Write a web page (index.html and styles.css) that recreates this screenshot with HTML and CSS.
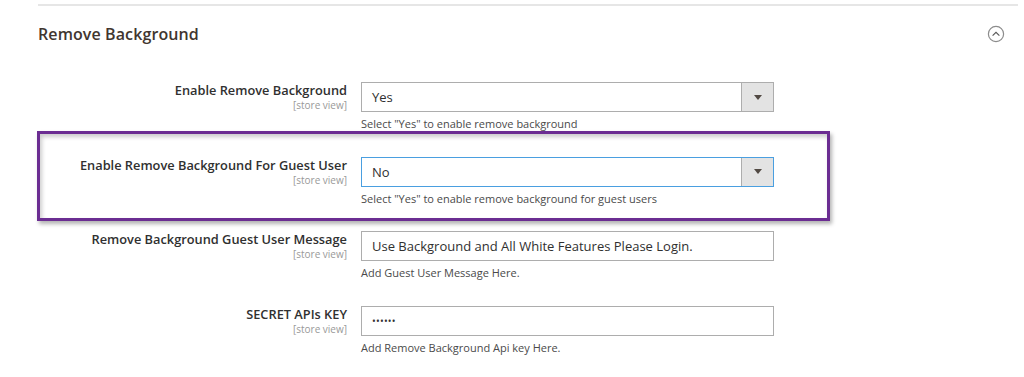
FILE: index.html
```html
<!DOCTYPE html>
<html>
<head>
<meta charset="utf-8">
<link rel="stylesheet" href="styles.css">
</head>
<body>
<div class="section">
  <div class="section-head">
    <h2 class="title">Remove Background</h2>
    <span class="toggle">
      <svg width="18" height="18" viewBox="0 0 18 18"><circle cx="9" cy="9" r="7.6" fill="none" stroke="#8c8c8c" stroke-width="1.2"/><path d="M5.6 10.6 L9 7.4 L12.4 10.6" fill="none" stroke="#5a5a5a" stroke-width="1.2"/></svg>
    </span>
  </div>
  <div class="rows">
    <div class="row">
      <div class="label"><span class="name">Enable Remove Background</span><span class="scope">[store view]</span></div>
      <div class="control">
        <div class="select"><span class="val">Yes</span><span class="btn"><span class="arrow"></span></span></div>
        <div class="hint">Select "Yes" to enable remove background</div>
      </div>
    </div>
    <div class="row highlighted">
      <div class="label"><span class="name">Enable Remove Background For Guest User</span><span class="scope">[store view]</span></div>
      <div class="control">
        <div class="select focused"><span class="val">No</span><span class="btn"><span class="arrow"></span></span></div>
        <div class="hint">Select "Yes" to enable remove background for guest users</div>
      </div>
    </div>
    <div class="row">
      <div class="label"><span class="name">Remove Background Guest User Message</span><span class="scope">[store view]</span></div>
      <div class="control">
        <div class="input"><span class="val">Use Background and All White Features Please Login.</span></div>
        <div class="hint">Add Guest User Message Here.</div>
      </div>
    </div>
    <div class="row">
      <div class="label"><span class="name">SECRET APIs KEY</span><span class="scope">[store view]</span></div>
      <div class="control">
        <div class="input"><span class="val dots">••••••</span></div>
        <div class="hint">Add Remove Background Api key Here.</div>
      </div>
    </div>
  </div>
</div>
</body>
</html>
```

FILE: styles.css
```css
* { box-sizing: border-box; }
html, body { margin: 0; padding: 0; background: #ffffff; }
body {
  font-family: "Open Sans", "Noto Sans", sans-serif;
  color: #303030;
  width: 1024px;
  height: 377px;
  overflow: hidden;
}
.section {
  margin: 4px 6px 0 38px;
  border-top: 2px solid #e6e6e6;
}
.section-head {
  display: flex;
  align-items: center;
  justify-content: space-between;
  height: 56px;
}
.title {
  margin: 0;
  font-size: 16px;
  font-weight: 600;
  color: #41362f;
  letter-spacing: 0.1px;
}
.toggle {
  display: flex;
  margin-right: 13px;
}
.rows {
  display: flex;
  flex-direction: column;
  padding-top: 20px;
}
.row {
  display: grid;
  grid-template-columns: 309px 413px;
  column-gap: 14px;
  height: 74.5px;
}
.label {
  display: flex;
  flex-direction: column;
  align-items: flex-end;
  text-align: right;
}
.name {
  font-size: 12.8px;
  font-weight: 600;
  color: #303030;
  line-height: 17px;
}
.scope {
  font-size: 10px;
  color: #999999;
  line-height: 12px;
}
.select, .input {
  height: 30px;
  border: 1px solid #adadad;
  background: #ffffff;
  display: flex;
  align-items: center;
}
.select.focused { border-color: #4a9fe0; }
.val {
  flex: 1;
  padding-left: 10px;
  font-size: 13px;
  color: #303030;
}
.dots { font-size: 10px; letter-spacing: 0.2px; }
.btn {
  width: 32px;
  align-self: stretch;
  background: #e3e3e3;
  border-left: 1px solid #adadad;
  display: flex;
  align-items: center;
  justify-content: center;
}
.arrow {
  width: 0;
  height: 0;
  border-left: 4px solid transparent;
  border-right: 4px solid transparent;
  border-top: 5px solid #514943;
}
.hint {
  margin-top: 5px;
  font-size: 11px;
  color: #4a4a4a;
  line-height: 14px;
}
.highlighted { position: relative; }
.highlighted::after {
  content: "";
  position: absolute;
  left: -1px;
  top: -26px;
  width: 787px;
  height: 84px;
  border: 3px solid #6b2d92;
  box-shadow: 2px 3px 4px rgba(0,0,0,0.3), inset 2px 3px 4px rgba(0,0,0,0.2);
  pointer-events: none;
}
```
